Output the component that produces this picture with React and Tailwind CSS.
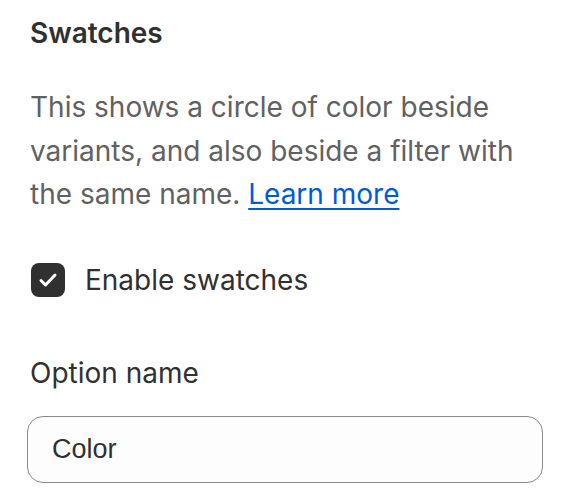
import React from "react";

export default function App() {
  return (
    <div className="w-[570px] h-[501px] bg-white px-[30px] pt-[14px] overflow-hidden" style={{ fontFamily: "Inter, 'Noto Sans', sans-serif" }}>
      <h2 className="text-[28px] leading-[38px] font-semibold text-[#303030]">Swatches</h2>
      <p className="mt-[34px] text-[28px] leading-[43.5px] text-[#616161] w-[512px]">
        This shows a circle of color beside variants, and also beside a filter with the same name.{" "}
        <a href="#" className="text-[#005bd3] underline underline-offset-[4px]">Learn more</a>
      </p>
      <label className="mt-[46px] flex items-center gap-[20px] ml-[1px]">
        <span className="w-[34px] h-[34px] rounded-[8px] bg-[#303030] flex items-center justify-center">
          <svg width="24" height="24" viewBox="0 0 24 24" fill="none">
            <path d="M5 12.5l4.5 4.5 9.5-10" stroke="white" strokeWidth="3" strokeLinecap="round" strokeLinejoin="round" />
          </svg>
        </span>
        <span className="text-[28px] leading-[34px] text-[#303030]">Enable swatches</span>
      </label>
      <div className="mt-[59px] text-[28px] leading-[34px] text-[#303030]">Option name</div>
      <div className="mt-[26px] h-[67px] w-[516px] -ml-[3px] rounded-[16px] border border-[#8a8a8a] bg-[#fdfdfd] flex items-center px-[24px]">
        <span className="text-[27px] text-[#303030]" style={{ fontFamily: "'Liberation Sans', Arial, sans-serif" }}>Color</span>
      </div>
    </div>
  );
}
